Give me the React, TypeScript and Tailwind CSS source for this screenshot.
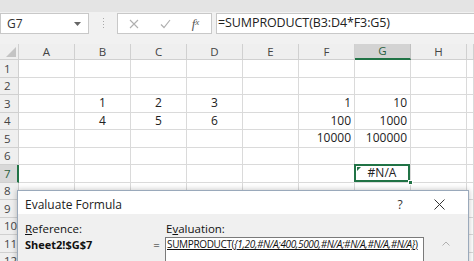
import React from 'react';

const COLS = ['A', 'B', 'C', 'D', 'E', 'F', 'G', 'H', ''];

type Cell = { v: string; align?: 'c' | 'r' };
const DATA: Record<number, Record<string, Cell>> = {
  3: { B: { v: '1', align: 'c' }, C: { v: '2', align: 'c' }, D: { v: '3', align: 'c' }, F: { v: '1', align: 'r' }, G: { v: '10', align: 'r' } },
  4: { B: { v: '4', align: 'c' }, C: { v: '5', align: 'c' }, D: { v: '6', align: 'c' }, F: { v: '100', align: 'r' }, G: { v: '1000', align: 'r' } },
  5: { F: { v: '10000', align: 'r' }, G: { v: '100000', align: 'r' } },
};

const font = 'font-["Open_Sans","Noto_Sans",sans-serif]';

function FormulaBar() {
  return (
    <>
      <div className="h-[12px] bg-[#e4e4e4]" />
      <div className="h-[32px] bg-[#f1f1f1] flex items-start pt-[1px]">
        <div className="w-[89px] h-[21px] bg-white border border-[#c8c8c8] flex items-center justify-between pl-[6px] pr-[7px] text-[12px] text-[#333]">
          <span>G7</span>
          <svg width="7" height="4" viewBox="0 0 7 4"><path d="M0 0h7L3.5 4z" fill="#666" /></svg>
        </div>
        <div className="w-[28px] h-[21px] flex items-center justify-center">
          <svg width="3" height="11" viewBox="0 0 3 11" fill="#a8a8a8">
            <rect x="1" y="0" width="1" height="1" /><rect x="1" y="3" width="1" height="1" />
            <rect x="1" y="6" width="1" height="1" /><rect x="1" y="9" width="1" height="1" />
          </svg>
        </div>
        <div className="w-[95px] h-[21px] bg-white border border-[#c8c8c8] flex items-center">
          <div className="w-[32px] flex justify-center">
            <svg width="10" height="10" viewBox="0 0 10 10"><path d="M1 1l8 8M9 1L1 9" stroke="#b0b0b0" strokeWidth="1.1" /></svg>
          </div>
          <div className="w-[30px] flex justify-center">
            <svg width="11" height="10" viewBox="0 0 11 10"><path d="M1 5.5l3 3L10 1" stroke="#b0b0b0" strokeWidth="1.2" fill="none" /></svg>
          </div>
          <div className="flex-1 flex justify-center text-[13px] italic text-[#555] font-['Liberation_Serif',serif]">
            f<span className="text-[9px] translate-y-[2px]">x</span>
          </div>
        </div>
        <div className="ml-[4px] flex-1 h-[21px] bg-white border border-[#c8c8c8] border-r-0 flex items-center pl-[1px] text-[12.5px] text-[#222] tracking-[-0.1px]">
          =SUMPRODUCT(B3:D4*F3:G5)
        </div>
      </div>
    </>
  );
}

function Grid() {
  const rows = Array.from({ length: 12 }, (_, i) => i + 1);
  return (
    <div className="grid grid-cols-[19px_repeat(8,56px)_1fr] auto-rows-[17.5px] [grid-template-rows:16px]">
      <div className="bg-[#efefef] border-r border-b border-[#d0d0d0] relative">
        <svg className="absolute right-[2px] bottom-[2px]" width="10" height="10" viewBox="0 0 10 10"><path d="M10 0V10H0z" fill="#c4c4c4" /></svg>
      </div>
      {COLS.map((c, i) =>
        c === 'G' ? (
          <div key={i} className="bg-[#d3d3d3] border-r border-[#c0c0c0] border-b-2 border-b-[#217346] flex items-center justify-center text-[11.5px] text-[#2c5f3f]">{c}</div>
        ) : (
          <div key={i} className="bg-[#efefef] border-r border-b border-[#d0d0d0] flex items-center justify-center text-[11.5px] text-[#444]">{c}</div>
        )
      )}
      {rows.map((r) => (
        <React.Fragment key={r}>
          <div
            className={
              r === 7
                ? 'bg-[#d8d8d8] border-r-2 border-r-[#217346] border-b border-b-[#d0d0d0] flex items-center pl-[4px] text-[11.5px] text-[#2c5f3f]'
                : 'bg-[#efefef] border-r border-b border-[#d0d0d0] flex items-center pl-[4px] text-[11.5px] text-[#444]'
            }
          >
            {r}
          </div>
          {COLS.map((c, i) => {
            const cell = DATA[r]?.[c];
            if (r === 7 && c === 'G') {
              return (
                <div key={i} className="relative border-r border-b border-[#dadada]">
                  <div className="absolute -left-[1px] -top-[1px] right-0 bottom-0 border-2 border-[#217346] flex items-center justify-center text-[12px] text-[#222]">
                    #N/A
                  </div>
                  <svg className="absolute left-[2px] top-[2px]" width="4" height="4" viewBox="0 0 4 4"><path d="M0 0h4L0 4z" fill="#217346" /></svg>
                  <div className="absolute -right-[3px] -bottom-[3px] w-[5px] h-[5px] bg-[#217346] border border-white" />
                </div>
              );
            }
            return (
              <div
                key={i}
                className={
                  'border-r border-b border-[#dadada] flex items-center px-[3px] text-[12px] text-[#222] ' +
                  (cell?.align === 'r' ? 'justify-end' : 'justify-center')
                }
              >
                {cell?.v}
              </div>
            );
          })}
        </React.Fragment>
      ))}
    </div>
  );
}

function EvaluateDialog() {
  return (
    <div className="absolute left-[17px] top-[190px] w-[452px] h-[80px] bg-[#f0f0f0] border border-[#9aa9bb] shadow-[0_0_6px_rgba(0,0,0,0.25)]">
      <div className="h-[23px] bg-white flex items-center pt-[4px] pl-[7px] text-[12px] text-[#222]">
        <span className="flex-1">Evaluate Formula</span>
        <span className="w-[20px] text-center text-[12px] text-[#333]">?</span>
        <div className="w-[58px] flex justify-center">
          <svg width="11" height="11" viewBox="0 0 11 11"><path d="M0.5 0.5l10 10M10.5 0.5l-10 10" stroke="#333" strokeWidth="1" /></svg>
        </div>
      </div>
      <div className="flex pt-[7px] text-[11.5px] text-[#111]">
        <div className="w-[130px] pl-[7px]">
          <div className="leading-[16px]"><span className="underline">R</span>eference:</div>
          <div className="leading-[16px] font-bold text-[11px]">Sheet2!$G$7</div>
        </div>
        <div className="w-[17px] pt-[16px] leading-[16px] text-center">=</div>
        <div className="w-[259px]">
          <div className="leading-[16px] pl-[1px]">E<span className="underline">v</span>aluation:</div>
          <div className="h-[30px] bg-white border border-[#7a7a7a] px-[1px] text-[10px] leading-[13px] tracking-[-0.35px] whitespace-nowrap overflow-hidden">
            <span className="underline">SUMPRODUCT(<i>{'{1,20,#N/A;400,5000,#N/A;#N/A,#N/A,#N/A}'}</i>)</span>
          </div>
        </div>
        <div className="flex-1 flex justify-center pt-[20px]">
          <svg width="8" height="5" viewBox="0 0 8 5"><path d="M0.5 4.5L4 1l3.5 3.5" stroke="#b0b0b0" fill="none" /></svg>
        </div>
      </div>
    </div>
  );
}

export default function App() {
  return (
    <div className={`w-[474px] h-[261px] relative overflow-hidden bg-white ${font}`}>
      <FormulaBar />
      <Grid />
      <EvaluateDialog />
    </div>
  );
}
